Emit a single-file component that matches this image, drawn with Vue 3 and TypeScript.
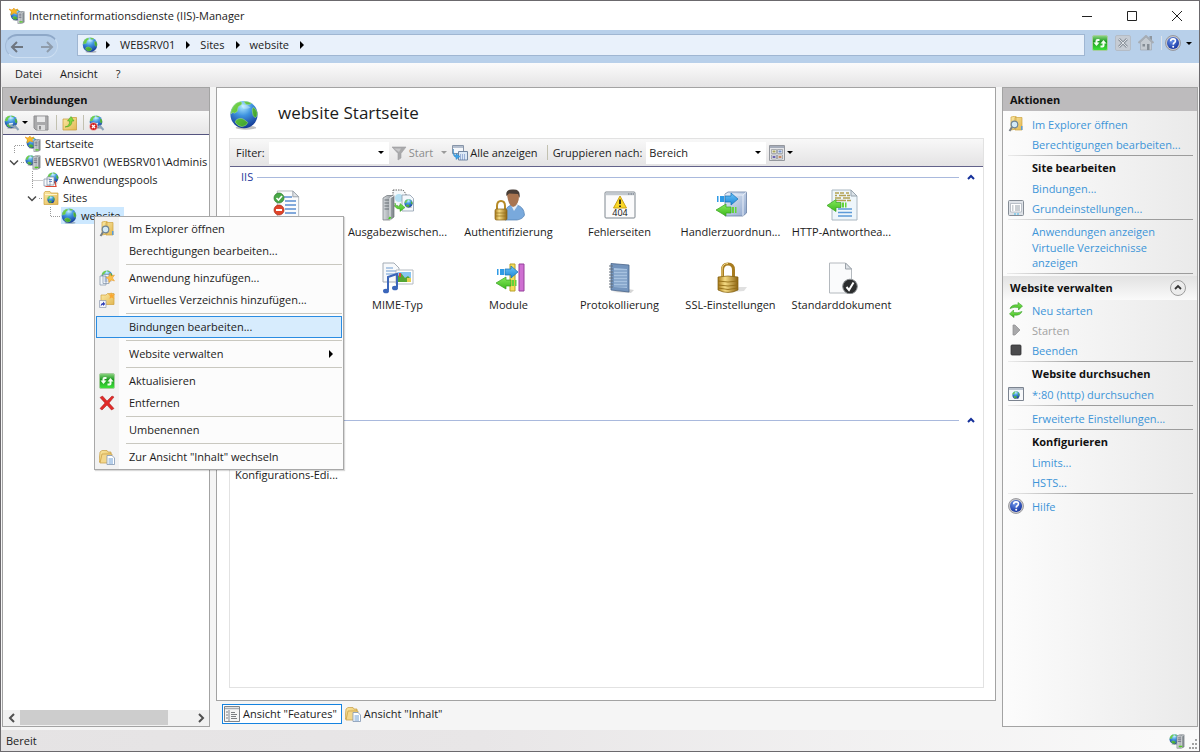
<script setup lang="ts">
import { ref } from 'vue'

interface TreeNode {
  label: string
  icon: string
  level: number
  guide: string
  open?: boolean
  selected?: boolean
}
interface MenuEntry {
  label?: string
  icon?: string
  hot?: boolean
  sub?: boolean
}
interface Feature {
  label: string
  icon: string
  badge?: string
}
interface ActionEntry {
  kind: 'link' | 'title' | 'line' | 'wrap'
  label?: string
  icon?: string
  disabled?: boolean
}

const crumbs: string[] = ['WEBSRV01', 'Sites', 'website']
const menus: string[] = ['Datei', 'Ansicht', '?']

const tree: TreeNode[] = [
  { label: 'Startseite', icon: 'iis', level: 0, guide: 'M7.5 18V10.5H18' },
  { label: 'WEBSRV01 (WEBSRV01\\Adminis', icon: 'server', level: 0, guide: 'M14 9.5H18', open: true },
  { label: 'Anwendungspools', icon: 'pool', level: 1, guide: 'M7.5 0V18M7.5 9.5H18' },
  { label: 'Sites', icon: 'sites', level: 1, guide: 'M14 9.5H18', open: true },
  { label: 'website', icon: 'globe', level: 2, guide: 'M7.5 0V9.5H18', selected: true },
]

const contextMenu: MenuEntry[] = [
  { label: 'Im Explorer öffnen', icon: 'explore' },
  { label: 'Berechtigungen bearbeiten...' },
  {},
  { label: 'Anwendung hinzufügen...', icon: 'appadd' },
  { label: 'Virtuelles Verzeichnis hinzufügen...', icon: 'vdir' },
  {},
  { label: 'Bindungen bearbeiten...', hot: true },
  {},
  { label: 'Website verwalten', sub: true },
  {},
  { label: 'Aktualisieren', icon: 'refresh' },
  { label: 'Entfernen', icon: 'remove' },
  {},
  { label: 'Umbenennen' },
  {},
  { label: 'Zur Ansicht "Inhalt" wechseln', icon: 'content' },
]

const features: Feature[] = [
  { label: '', icon: 'rules' },
  { label: 'Ausgabezwischen...', icon: 'cache' },
  { label: 'Authentifizierung', icon: 'auth' },
  { label: 'Fehlerseiten', icon: 'error', badge: '404' },
  { label: 'Handlerzuordnun...', icon: 'handler' },
  { label: 'HTTP-Antworthea...', icon: 'headers' },
  { label: '', icon: '' },
  { label: 'MIME-Typ', icon: 'mime' },
  { label: 'Module', icon: 'module' },
  { label: 'Protokollierung', icon: 'log' },
  { label: 'SSL-Einstellungen', icon: 'lock' },
  { label: 'Standarddokument', icon: 'doc' },
]

const siteActions: ActionEntry[] = [
  { kind: 'link', label: 'Im Explorer öffnen', icon: 'explore' },
  { kind: 'link', label: 'Berechtigungen bearbeiten...' },
  { kind: 'line' },
  { kind: 'title', label: 'Site bearbeiten' },
  { kind: 'link', label: 'Bindungen...' },
  { kind: 'link', label: 'Grundeinstellungen...', icon: 'settings' },
  { kind: 'line' },
  { kind: 'wrap', label: 'Anwendungen anzeigen' },
  { kind: 'wrap', label: 'Virtuelle Verzeichnisse anzeigen' },
]
const manageActions: ActionEntry[] = [
  { kind: 'link', label: 'Neu starten', icon: 'restart' },
  { kind: 'link', label: 'Starten', icon: 'play', disabled: true },
  { kind: 'link', label: 'Beenden', icon: 'stop' },
  { kind: 'line' },
  { kind: 'title', label: 'Website durchsuchen' },
  { kind: 'link', label: '*:80 (http) durchsuchen', icon: 'browse' },
  { kind: 'line' },
  { kind: 'link', label: 'Erweiterte Einstellungen...' },
  { kind: 'line' },
  { kind: 'title', label: 'Konfigurieren' },
  { kind: 'link', label: 'Limits...' },
  { kind: 'link', label: 'HSTS...' },
  { kind: 'line' },
  { kind: 'link', label: 'Hilfe', icon: 'help' },
]

const filter = ref('')
const grouping = ref('Bereich')
</script>

<template>
  <div class="window">
    <svg class="sprite" aria-hidden="true">
      <defs>
        <radialGradient id="sea" cx=".45" cy=".2" r=".85">
          <stop offset="0" stop-color="#b4ecff" /><stop offset=".4" stop-color="#3f94e0" /><stop offset="1" stop-color="#0f2f8c" />
        </radialGradient>
        <linearGradient id="land" x1="0" y1="0" x2="1" y2="1">
          <stop offset="0" stop-color="#7fdc50" /><stop offset="1" stop-color="#2c9424" />
        </linearGradient>
        <linearGradient id="gold" x1="0" y1="0" x2="1" y2="1">
          <stop offset="0" stop-color="#fbe9a4" /><stop offset="1" stop-color="#e2b854" />
        </linearGradient>
        <linearGradient id="brass" x1="0" y1="0" x2="1" y2="0">
          <stop offset="0" stop-color="#a87a1c" /><stop offset=".35" stop-color="#f6dc84" /><stop offset="1" stop-color="#8e6412" />
        </linearGradient>
        <linearGradient id="steel" x1="0" y1="0" x2="1" y2="0">
          <stop offset="0" stop-color="#d9dde0" /><stop offset="1" stop-color="#7f868c" />
        </linearGradient>
        <linearGradient id="leaf" x1="0" y1="0" x2="0" y2="1">
          <stop offset="0" stop-color="#8fd884" /><stop offset=".4" stop-color="#1f9a22" /><stop offset="1" stop-color="#3ee63a" />
        </linearGradient>
        <linearGradient id="cube" x1="0" y1="0" x2="1" y2="1">
          <stop offset="0" stop-color="#e8f0fa" /><stop offset="1" stop-color="#8ea6cc" />
        </linearGradient>
        <linearGradient id="sky" x1="0" y1="0" x2="0" y2="1">
          <stop offset="0" stop-color="#6cc4f8" /><stop offset="1" stop-color="#1c86d8" />
        </linearGradient>
        <linearGradient id="lime" x1="0" y1="0" x2="0" y2="1">
          <stop offset="0" stop-color="#86ea5c" /><stop offset="1" stop-color="#3cb81c" />
        </linearGradient>
        <radialGradient id="royal" cx=".4" cy=".3" r=".8">
          <stop offset="0" stop-color="#6a94ea" /><stop offset="1" stop-color="#0c2a9a" />
        </radialGradient>
      </defs>

      <symbol id="globe" viewBox="0 0 32 32">
        <ellipse cx="18" cy="29.500" rx="11" ry="2.200" fill="#000" opacity=".25" />
        <circle cx="16" cy="15.500" r="14.500" fill="url(#sea)" />
        <path d="M5 6Q8 2.500 12 1.800Q15 2.500 13 5L10 7Q9 9 9 12L6 14Q4 12 2 15Q2 10 5 6ZM16 1.500Q21 1.500 24 3.500Q22 5.500 18 4.500ZM26 8Q28.500 9 30 13Q30.500 18 28 19Q25 17 25 13Q24 9 26 8ZM8 21Q13 18 17 21.500L20 24Q19 27.500 14 28.500Q9 28 6.500 23.500Z" fill="url(#land)" stroke="#b2e88a" stroke-width=".5" />
        <path d="M13 5Q19 4 23 8Q19 10 15 9Z" fill="#fff" opacity=".3" />
      </symbol>
      <symbol id="tower" viewBox="0 0 10 16">
        <path d="M1 2L4 .5H9V14L6 15.500H1Z" fill="url(#steel)" stroke="#70777c" stroke-width=".6" />
        <path d="M2 4H6M2 6H6M2 8H6" stroke="#667" stroke-width=".8" />
        <path d="M6 15.500V2.500L9 .5" fill="none" stroke="#f4f6f7" stroke-width=".6" />
        <path d="M3 13.500H7" stroke="#52cc20" stroke-width="1.600" />
      </symbol>
      <symbol id="server" viewBox="0 0 16 16">
        <use href="#globe" x="0" y="1" width="11" height="11" />
        <use href="#tower" x="7" y="1" width="9" height="15" />
      </symbol>
      <symbol id="iis" viewBox="0 0 16 16">
        <use href="#globe" x="1" y="1" width="12" height="12" />
        <use href="#tower" x="8" y="3" width="8" height="13" />
        <path d="M0 1L3 2L5 0L6 2L9 1L7 4L8 6L5 5L2 7L2.500 4Z" fill="#f8b824" stroke="#e08c10" stroke-width=".5" />
      </symbol>
      <symbol id="globeplug" viewBox="0 0 16 16">
        <use href="#globe" x="0" y="0" width="14" height="14" />
        <path d="M5 9Q9 13 11 11L14.500 15" fill="none" stroke="#8da4b8" stroke-width="2" />
        <path d="M5 9L9 8.500" stroke="#e4eef4" stroke-width="1.500" />
      </symbol>
      <symbol id="globedel" viewBox="0 0 16 16">
        <use href="#globeplug" width="16" height="16" />
        <circle cx="4.500" cy="11.500" r="4" fill="#d02020" stroke="#fff" stroke-width=".5" />
        <path d="M3 10L6 13M6 10L3 13" stroke="#fff" stroke-width="1.400" />
      </symbol>
      <symbol id="save" viewBox="0 0 16 16">
        <path d="M1 1H15V15H3L1 13Z" fill="#a9a9ab" stroke="#8d8d8f" />
        <path d="M4 1.500H12V7H4Z" fill="#e9e9ea" />
        <path d="M4.500 10H12V15H4.500Z" fill="#dcdcdd" />
        <path d="M6 11H8V14.500H6Z" fill="#8d8d8f" />
      </symbol>
      <symbol id="folderup" viewBox="0 0 16 16">
        <path d="M1 4H8L9.500 2.500H14.500V15H1Z" fill="url(#gold)" stroke="#c69a35" stroke-width=".7" />
        <path d="M3 12Q8 11 7.500 6H5.500L9 1.500L12 6H10Q10 12 3 12Z" fill="#7ed83c" stroke="#3f9a1c" stroke-width=".5" />
      </symbol>
      <symbol id="pool" viewBox="0 0 16 16">
        <use href="#globe" x="4" y="0" width="12" height="12" />
        <path d="M1 7H7V14H1ZM4 5H11V13H4Z" fill="#f7fafc" stroke="#7b8ba0" stroke-width=".7" />
        <path d="M6 7.500H9M6 9.500H9" stroke="#4f76bc" stroke-width=".8" />
        <path d="M2.500 14.500L13 14.500L12 9" fill="none" stroke="#dc4a36" stroke-width="1.200" />
      </symbol>
      <symbol id="sites" viewBox="0 0 16 16">
        <path d="M1 3L2 1.500H7L8 3H15V14.500H1Z" fill="url(#gold)" stroke="#cfa13c" stroke-width=".7" />
        <path d="M2 4.500H14" stroke="#fff5cc" />
        <use href="#globe" x="4" y="5.500" width="8" height="8" />
      </symbol>
      <symbol id="explore" viewBox="0 0 16 16">
        <path d="M3 1L8 0V13L3 14ZM7 1.500H14V14H7Z" fill="url(#gold)" stroke="#cfa540" stroke-width=".7" />
        <path d="M13 10H14.500V14H13Z" fill="#5a9cd8" />
        <path d="M4.500 10.500L1.500 15" stroke="#777f86" stroke-width="2" />
        <circle cx="6.500" cy="8.500" r="3.300" fill="#d3eaf8" stroke="#6f8494" stroke-width="1.200" />
      </symbol>
      <symbol id="appadd" viewBox="0 0 16 16">
        <use href="#globe" x="2" y="0" width="12" height="12" />
        <path d="M1 6H7V15H1ZM4 4.500H10V13.500H4Z" fill="#f2f6fa" stroke="#8192a6" stroke-width=".7" />
        <path d="M5.500 7H8.500M5.500 9H8.500M5.500 11H8.500" stroke="#6b86b4" stroke-width=".8" />
        <path d="M11 3L12 6L15.500 5L13.500 8L15.500 11L12 10L10 12.500L9.500 9L7 7.500L10 6.500Z" fill="#fbc14a" stroke="#e9962a" stroke-width=".5" />
      </symbol>
      <symbol id="vdir" viewBox="0 0 16 16">
        <path d="M2 3H7L8.500 1.500H15V12.500H2Z" fill="url(#gold)" stroke="#cfa13c" stroke-width=".7" />
        <path d="M12 0L13 2.500L16 2L14 4.500L15.500 7L12.500 5.500L10.500 7L11 4L9 2L11.500 2.500Z" fill="#f9a832" />
        <path d="M.5 8.500H7V15.500H.5Z" fill="#f6f8fc" stroke="#8e9ab0" stroke-width=".7" />
        <path d="M1.800 14.500Q1.500 11 4 11V9.500L6.300 12L4 14V12.700Q2.500 12.500 1.800 14.500Z" fill="#2f3fb8" />
      </symbol>
      <symbol id="refresh" viewBox="0 0 16 16">
        <rect x=".5" y=".5" width="15" height="15" rx="1.500" fill="url(#leaf)" stroke="#a7cda0" />
        <path d="M7.500 4H5.500Q3.500 4 3.500 6V7.500H1.500L4.500 11L7.500 7.500H5.500V6H7.500ZM8.500 12.500H10.500Q12.500 12.500 12.500 10.500V8.500H14.500L11.500 5L8.500 8.500H10.500V10.500H8.500Z" fill="#f4fff2" />
      </symbol>
      <symbol id="remove" viewBox="0 0 16 16">
        <path d="M1 2.500L3.500 1L8 6L13 1L15 2L10 8L15 13.500L12.500 15L8 10L3 15L1 13.500L6 8Z" fill="#e02b28" stroke="#a81818" stroke-width=".5" />
      </symbol>
      <symbol id="content" viewBox="0 0 16 16">
        <path d="M1 3L3 1.500H8L9 3H12V13H0Z" fill="url(#gold)" stroke="#c69c43" stroke-width=".7" />
        <path d="M3 5H13V14H1Z" fill="#f3d78c" stroke="#c69c43" stroke-width=".7" />
        <path d="M8 6.500H13L15.500 9V15.500H8Z" fill="#fff" stroke="#7f95b2" stroke-width=".8" />
        <path d="M9.500 10H14M9.500 12H14M9.500 14H14" stroke="#5c93d0" stroke-width=".9" />
      </symbol>
      <symbol id="stopgray" viewBox="0 0 16 16">
        <rect x=".5" y=".5" width="15" height="15" rx="1.500" fill="#c6ccd4" stroke="#b4bcc6" />
        <path d="M4 4L12 12M12 4L4 12" stroke="#8e959e" stroke-width="2.600" />
        <path d="M4 4L12 12M12 4L4 12" stroke="#dde1e6" stroke-width="1" />
      </symbol>
      <symbol id="home" viewBox="0 0 16 16">
        <path d="M11.500 1H14V5H11.500Z" fill="#8f979f" />
        <path d="M2.500 7L8 2L13.500 7V15H2.500Z" fill="#c5cbd1" stroke="#a0a8b0" stroke-width=".7" />
        <path d="M.5 8L8 1L15.500 8" fill="none" stroke="#a6adb5" stroke-width="2" />
        <path d="M4.500 9H7V11.500H4.500ZM9 9H11.500V15H9Z" fill="#858d95" />
      </symbol>
      <symbol id="help" viewBox="0 0 16 16">
        <circle cx="8" cy="8" r="7.500" fill="#c8c8cc" stroke="#8b8b90" stroke-width=".8" />
        <circle cx="8" cy="8" r="6" fill="url(#royal)" />
        <path d="M5.700 6.200Q5.800 3.800 8.200 3.900Q10.500 4 10.400 6Q10.300 7.200 9 8Q8.300 8.500 8.200 9.600" fill="none" stroke="#fff" stroke-width="1.700" />
        <circle cx="8.200" cy="11.800" r="1" fill="#fff" />
      </symbol>
      <symbol id="funnel" viewBox="0 0 16 16">
        <path d="M1 2H15L10 8.500V13L7 15V8.500Z" fill="#a9a9ab" stroke="#a0a0a2" stroke-width=".6" />
        <path d="M3 3.500H10L8 7Z" fill="#c8c8ca" />
      </symbol>
      <symbol id="showall" viewBox="0 0 16 16">
        <path d="M.5 .5H11.500V8.500H.5Z" fill="#f6f8fb" stroke="#8795a8" />
        <path d="M1 2H11" stroke="#9eacc0" stroke-width="1.500" />
        <path d="M6.500 6.500H15.500V15H6.500Z" fill="#dce8f6" stroke="#7286a2" />
        <path d="M8 10H14M8 12H14M8 14H14" stroke="#5878b8" stroke-width="1" stroke-dasharray="1 1" />
        <path d="M1.500 4Q1 10 4 10.500V8.500L8 11.500L4 14.500V12.500Q0 11 1.500 4Z" fill="#3fa3e8" stroke="#1f78bc" stroke-width=".4" />
      </symbol>
      <symbol id="tiles" viewBox="0 0 16 16">
        <path d="M.5 .5H15.500V15.500H.5Z" fill="#e4e5e8" stroke="#94979d" />
        <path d="M1 2H15" stroke="#a5acba" stroke-width="2" />
        <path d="M2.500 4.500H7.500V8.500H2.500ZM8.500 4.500H13.500V8.500H8.500ZM2.500 10H7.500V14H2.500ZM8.500 10H13.500V14H8.500Z" fill="#f4f4f4" stroke="#8d9096" stroke-width=".7" />
        <path d="M3.500 5.500H6.500V7.500H3.500Z" fill="#a9a75c" /><path d="M9.500 5.500H12.500V7.500H9.500Z" fill="#6f8fca" />
        <path d="M3.500 11H6.500V13H3.500Z" fill="#6a64b0" /><path d="M9.500 11H12.500V13H9.500Z" fill="#c48a64" />
      </symbol>
      <symbol id="features" viewBox="0 0 16 16">
        <path d="M.5 .5H15.500V15.500H.5Z" fill="#f5f5f4" stroke="#808488" />
        <path d="M1 2.500H15M5 4V15" stroke="#a9adb2" stroke-width="1.500" />
        <path d="M2 6H4M2 9H4M2 12H4M7 6.500H11M7 8.500H13M7 10.500H12M7 12.500H13" stroke="#6d7074" stroke-width=".9" />
      </symbol>
      <symbol id="settings" viewBox="0 0 16 16">
        <rect x=".5" y=".5" width="15" height="15" rx="1" fill="#dfe3e8" stroke="#858c95" />
        <path d="M2.500 3.500H13.500V12H2.500Z" fill="#fff" stroke="#a3abb5" stroke-width=".7" />
        <path d="M4 6H5.500M7 6H12M4 8H5.500M7 8H12M4 10H5.500M7 10H12" stroke="#8b949e" stroke-width=".9" />
        <path d="M6 14H8M9 14H11" stroke="#45b6e6" />
      </symbol>
      <symbol id="restart" viewBox="0 0 16 16">
        <path d="M2 6.500Q4 2 10 3V.5L14.500 4L10.500 8V5.500Q6 4.500 2 6.500Z" fill="url(#lime)" stroke="#35a026" stroke-width=".6" />
        <path d="M14 9.500Q12 14 6 13V15.500L1.500 12L5.500 8V10.500Q10 11.500 14 9.500Z" fill="url(#lime)" stroke="#35a026" stroke-width=".6" />
      </symbol>
      <symbol id="play" viewBox="0 0 16 16">
        <path d="M5 3H7L12 8L7 13H5Z" fill="#a8a8aa" stroke="#8e8e90" stroke-width=".7" />
      </symbol>
      <symbol id="stop" viewBox="0 0 16 16">
        <rect x="3" y="3" width="10" height="10" rx="1" fill="#4b4b4d" stroke="#303032" stroke-width=".8" />
      </symbol>
      <symbol id="browse" viewBox="0 0 16 16">
        <path d="M.5 1.500H15.500V14.500H.5Z" fill="#f7f8fa" stroke="#7c8490" />
        <path d="M1 3H15" stroke="#a9b3c0" stroke-width="1.500" />
        <use href="#globe" x="4" y="5" width="8" height="8" />
      </symbol>

      <symbol id="page" viewBox="0 0 24 32">
        <path d="M1 1H17L23 7V31H1Z" fill="#fafbfc" stroke="#b4b9be" />
        <path d="M17 1V7H23Z" fill="#dfe3e7" stroke="#9ca3aa" />
      </symbol>
      <symbol id="rightleft" viewBox="0 0 32 32">
        <path d="M6 7H10V13H6ZM3 7H4.500V13H3Z" fill="#2f9ae6" />
        <path d="M11 7H17V4L24 10L17 16V13H11Z" fill="url(#sky)" stroke="#1670b4" stroke-width=".7" />
        <path d="M17 18H12V15L2 21L12 27V24H17Z" fill="url(#lime)" stroke="#38a020" stroke-width=".7" />
        <path d="M18 18H20V24H18ZM21 18H22.500V24H21Z" fill="#63d43a" />
      </symbol>
      <symbol id="rules" viewBox="0 0 32 32">
        <use href="#page" x="5" y="1" width="24" height="31" />
        <path d="M13 8H21M14 12H25M14 16H25M14 20H25M14 24H25" stroke="#5b8fd0" stroke-width="1.400" />
        <circle cx="8" cy="9" r="5" fill="#48a846" stroke="#2d7a2c" stroke-width=".7" />
        <path d="M5.500 9L7.500 11L11 7" fill="none" stroke="#fff" stroke-width="1.600" />
        <circle cx="8" cy="21" r="5" fill="#e0452a" stroke="#a82a16" stroke-width=".7" />
        <path d="M5 21H11" stroke="#fff" stroke-width="2" />
      </symbol>
      <symbol id="cache" viewBox="0 0 32 32">
        <path d="M11 1H21L24 5V17H11Z" fill="#f4f8fa" stroke="#555" stroke-dasharray="1.500 1" stroke-width=".9" />
        <circle cx="17" cy="9" r="4" fill="#b4dff2" />
        <path d="M1 9L5 6.500H12V28L8 31H1Z" fill="url(#steel)" stroke="#6d7378" stroke-width=".7" />
        <path d="M8 31V9L12 6.500" fill="none" stroke="#eef1f3" />
        <path d="M2.500 11H7M2.500 14H7M2.500 17H7M2.500 20H7" stroke="#676e74" stroke-width="1.200" />
        <path d="M7 30L8.500 28" stroke="#45ce20" stroke-width="2" />
        <path d="M20 6H28L31.500 9.500V22H20Z" fill="#f4f8fc" stroke="#8e9cac" stroke-width=".8" />
        <use href="#globe" x="22" y="10" width="9" height="9" />
        <path d="M13 14Q14 18 18 17V14.500L23 18.500L18 22.500V20Q12 20 13 14Z" fill="url(#lime)" stroke="#38a020" stroke-width=".5" />
      </symbol>
      <symbol id="auth" viewBox="0 0 32 32">
        <path d="M12 31Q10 19 18 16H24Q31 18 31.500 26Q30 30 24 31Z" fill="#79a9dc" stroke="#527fb2" stroke-width=".7" />
        <path d="M18 16L21 22L25 16Z" fill="#e5edf5" />
        <path d="M14 5Q14 1 20 1Q26 1 26 7Q26 16 20 18Q15 16 14 5Z" fill="#a87450" />
        <path d="M13.500 7Q12 0 20 .5Q28 0 26.500 9L25 5L16 4.500Z" fill="#483d36" />
        <path d="M4 21V17Q4 12 8 12Q12 12 12 17V21" fill="none" stroke="#b68a26" stroke-width="2" />
        <rect x="2" y="20" width="12" height="11" rx="1.500" fill="url(#brass)" stroke="#886214" stroke-width=".7" />
        <path d="M3 24H13M3 27H13" stroke="#94701c" stroke-width=".7" />
      </symbol>
      <symbol id="error" viewBox="0 0 32 32">
        <rect x="1" y="3" width="30" height="26" rx="1" fill="#fbfbfc" stroke="#7f878f" />
        <path d="M2 5H30" stroke="#c2c8cf" stroke-width="2.500" />
        <path d="M24 5H25.500M26.500 5H28M28.800 5H30" stroke="#66717c" />
        <path d="M16 7L22.500 19H9.500Z" fill="#fad727" stroke="#cba314" />
        <path d="M16 10.500V15M16 16.500V18" stroke="#1b1b1b" stroke-width="1.700" />
      </symbol>
      <symbol id="handler" viewBox="0 0 32 32">
        <path d="M10 5L13 3H31.500V24L28 27H10Z" fill="url(#cube)" stroke="#6a80a4" stroke-width=".8" />
        <path d="M28 27V6L31.500 3M28 6H10" fill="none" stroke="#e8eef8" />
        <use href="#rightleft" x="-1" y="0" width="32" height="32" />
      </symbol>
      <symbol id="headers" viewBox="0 0 32 32">
        <path d="M6 1H25L31 7V31H6Z" fill="#eef6fb" stroke="#a9b6c0" />
        <path d="M25 1V7H31Z" fill="#dae2e8" stroke="#98a4ae" />
        <path d="M9 4H13M14 4H18M20 4H23M9 6.500H11M13 6.500H20M21 6.500H24M9 9H15M17 9H24M10 11.500H20M21 11.500H25" stroke="#b3a152" stroke-width="1.600" />
        <path d="M12 20H26M12 23.500H26M12 27H26" stroke="#5c9ad8" stroke-width="1.500" />
        <path d="M15 13.500H10V10.500L1 16.500L10 22.500V18.500H15Z" fill="url(#lime)" stroke="#38a020" stroke-width=".7" />
        <path d="M16 13.500H18V18.500H16ZM19 13.500H20.500V18.500H19Z" fill="#63d43a" />
      </symbol>
      <symbol id="mime" viewBox="0 0 32 32">
        <path d="M1 1H12L17 6V20H1Z" fill="#f7f9fb" stroke="#a4acb5" />
        <path d="M4 6H11M4 9H14M4 12H14" stroke="#6d9bd2" stroke-width="1.200" />
        <path d="M14 8H31V22H14Z" fill="#fff" stroke="#b4bac1" />
        <path d="M16 10H29V20H16Z" fill="#87c4f0" />
        <path d="M16 20V14L19 11L23 16L26 14L29 17V20Z" fill="#54a634" />
        <path d="M17 11H19V15H17Z" fill="#e0463c" /><path d="M25 16H29V20H25Z" fill="#e4cf50" />
        <path d="M6 28V15L15 12V25" fill="none" stroke="#3b66ba" stroke-width="2" />
        <ellipse cx="4" cy="29" rx="3" ry="2.300" fill="#3b66ba" /><ellipse cx="13" cy="26" rx="3" ry="2.300" fill="#3b66ba" />
      </symbol>
      <symbol id="module" viewBox="0 0 32 32">
        <path d="M17 2H22V29H17Z" fill="#f4dd5c" stroke="#b9a028" />
        <path d="M26 2H31V29H26Z" fill="#cf70d2" stroke="#96409c" />
        <use href="#rightleft" x="1" y="0" width="32" height="32" />
      </symbol>
      <symbol id="log" viewBox="0 0 32 32">
        <path d="M8 30L27 31L30 28L24 27Z" fill="#000" opacity=".16" />
        <path d="M7 1.500L25 3V30L7 28Z" fill="#7394bd" stroke="#4a6489" stroke-width=".8" />
        <path d="M10 6L23 7V26L10 25Z" fill="#a7c2e0" />
        <path d="M10 9H23M10 12H23M10 15H23M10 18H23M10 21H23M10 24H23" stroke="#587ca9" stroke-width=".7" />
        <path d="M5 4H9M5 7H9M5 10H9M5 13H9M5 16H9M5 19H9M5 22H9M5 25H9" stroke="#66707c" stroke-width="1.100" />
      </symbol>
      <symbol id="lock" viewBox="0 0 32 32">
        <path d="M17 30L29 29L32 25L24 25Z" fill="#000" opacity=".12" />
        <path d="M7.500 16V8Q7.500 2 13 2Q18.500 2 18.500 8V16" fill="none" stroke="#a87c20" stroke-width="3" />
        <path d="M7 15V8Q7 1.500 13 1.500" fill="none" stroke="#f3db8a" stroke-width="1" />
        <path d="M3 15Q13 13 23 15V28Q13 33 3 28Z" fill="url(#brass)" stroke="#83600f" stroke-width=".7" />
        <path d="M3 19Q13 21 23 19M3 23Q13 25 23 23M3 26Q13 29 23 26" fill="none" stroke="#936d16" stroke-width=".9" />
      </symbol>
      <symbol id="doc" viewBox="0 0 32 32">
        <use href="#page" x="1" y="0" width="27" height="32" />
        <circle cx="24" cy="24.500" r="7.300" fill="#2b2d2e" stroke="#8b8f92" />
        <path d="M20.500 25L23 28L27.500 20.500" fill="none" stroke="#fff" stroke-width="2" />
      </symbol>
    </svg>

    <header class="titlebar">
      <svg class="ico"><use href="#iis" /></svg>
      <span class="caption">Internetinformationsdienste (IIS)-Manager</span>
      <button class="sys" aria-label="Minimieren"><svg viewBox="0 0 12 12"><path d="M1 6.500H11" /></svg></button>
      <button class="sys" aria-label="Maximieren"><svg viewBox="0 0 12 12"><path d="M1.500 1.500H10.500V10.500H1.500Z" /></svg></button>
      <button class="sys" aria-label="Schließen"><svg viewBox="0 0 12 12"><path d="M1 1L11 11M11 1L1 11" /></svg></button>
    </header>

    <nav class="navbar">
      <div class="history">
        <button aria-label="Zurück"><svg viewBox="0 0 14 12"><path d="M7 1L2 6L7 11M2 6H13" /></svg></button>
        <button class="dim" aria-label="Vorwärts"><svg viewBox="0 0 14 12"><path d="M7 1L12 6L7 11M12 6H1" /></svg></button>
      </div>
      <div class="address">
        <svg class="ico"><use href="#globe" /></svg>
        <i class="tri-r"></i>
        <template v-for="c in crumbs" :key="c">
          <button class="crumb">{{ c }}</button>
          <i class="tri-r"></i>
        </template>
      </div>
      <div class="navtools">
        <button aria-label="Aktualisieren"><svg class="ico"><use href="#refresh" /></svg></button>
        <button aria-label="Anhalten"><svg class="ico"><use href="#stopgray" /></svg></button>
        <button aria-label="Startseite"><svg class="ico"><use href="#home" /></svg></button>
        <i class="bar light"></i>
        <button class="helpbtn" aria-label="Hilfe"><svg class="ico"><use href="#help" /></svg><i class="tri-d"></i></button>
      </div>
    </nav>

    <div class="menubar">
      <button v-for="m in menus" :key="m">{{ m }}</button>
    </div>

    <main class="workspace">
      <section class="connections">
        <h2 class="panehead">Verbindungen</h2>
        <div class="conntools">
          <button aria-label="Verbinden"><svg class="ico"><use href="#globeplug" /></svg><i class="tri-d"></i></button>
          <button class="save" aria-label="Speichern"><svg class="ico"><use href="#save" /></svg></button>
          <i class="bar"></i>
          <button aria-label="Nach oben"><svg class="ico"><use href="#folderup" /></svg></button>
          <i class="bar"></i>
          <button aria-label="Verbindung löschen"><svg class="ico"><use href="#globedel" /></svg></button>
        </div>
        <ul class="tree">
          <li v-for="n in tree" :key="n.label" :class="'level' + n.level">
            <svg class="guide" viewBox="0 0 18 18">
              <path class="dots" :d="n.guide" />
              <path v-if="n.open" class="chev" d="M3 7.500L7 11.500L11 7.500" />
            </svg>
            <span class="node" :class="{ selected: n.selected }">
              <svg class="ico"><use :href="'#' + n.icon" /></svg>
              <span>{{ n.label }}</span>
            </span>
          </li>
        </ul>
        <div class="hscroll">
          <button aria-label="Nach links"><svg viewBox="0 0 8 10"><path d="M6 1L2 5L6 9" /></svg></button>
          <div class="track"><div class="thumb"></div></div>
          <button aria-label="Nach rechts"><svg viewBox="0 0 8 10"><path d="M2 1L6 5L2 9" /></svg></button>
        </div>
      </section>

      <section class="center">
        <div class="sheet">
          <div class="pagehead">
            <svg class="big"><use href="#globe" /></svg>
            <h1>website Startseite</h1>
          </div>
          <div class="featurebox">
            <div class="filterbar">
              <label for="filter">Filter:</label>
              <div class="combo">
                <input id="filter" v-model="filter" type="text" />
                <i class="tri-d"></i>
              </div>
              <button class="start" disabled><svg class="ico"><use href="#funnel" /></svg>Start<i class="tri-d"></i></button>
              <button class="all"><svg class="ico"><use href="#showall" /></svg>Alle anzeigen</button>
              <i class="bar"></i>
              <label for="group">Gruppieren nach:</label>
              <div class="combo">
                <select id="group" v-model="grouping"><option>Bereich</option></select>
                <i class="tri-d"></i>
              </div>
              <button class="view" aria-label="Ansicht"><svg class="ico"><use href="#tiles" /></svg><i class="tri-d"></i></button>
            </div>
            <div class="group">
              <div class="grouphead">
                <span>IIS</span><i class="rule"></i>
                <button aria-label="Gruppe einklappen"><svg viewBox="0 0 8 6"><path d="M1 5L4 2L7 5" /></svg></button>
              </div>
              <div class="grid tall">
                <div v-for="(f, i) in features" :key="i" class="feature">
                  <svg class="large" viewBox="0 0 32 32">
                    <use v-if="f.icon" :href="'#' + f.icon" width="32" height="32" />
                    <text v-if="f.badge" class="badge" x="16" y="27" text-anchor="middle">{{ f.badge }}</text>
                  </svg>
                  <span>{{ f.label }}</span>
                </div>
              </div>
            </div>
            <div class="group">
              <div class="grouphead">
                <i class="rule"></i>
                <button aria-label="Gruppe einklappen"><svg viewBox="0 0 8 6"><path d="M1 5L4 2L7 5" /></svg></button>
              </div>
              <div class="grid">
                <div class="feature"><svg class="large"></svg><span>Konfigurations-Edi...</span></div>
              </div>
            </div>
          </div>
        </div>
        <div class="tabs">
          <button class="tab active"><svg class="ico"><use href="#features" /></svg>Ansicht "Features"</button>
          <button class="tab"><svg class="ico"><use href="#content" /></svg>Ansicht "Inhalt"</button>
        </div>
      </section>

      <aside class="actions">
        <h2 class="panehead">Aktionen</h2>
        <div class="actionlist first">
          <template v-for="(a, i) in siteActions" :key="i">
            <hr v-if="a.kind === 'line'" />
            <h3 v-else-if="a.kind === 'title'">{{ a.label }}</h3>
            <a v-else href="#" :class="{ wrap: a.kind === 'wrap' }">
              <svg class="ico"><use v-if="a.icon" :href="'#' + a.icon" /></svg>
              <span>{{ a.label }}</span>
            </a>
          </template>
        </div>
        <hr />
        <div class="subhead">
          <h2>Website verwalten</h2>
          <button aria-label="Einklappen"><svg viewBox="0 0 16 16"><circle cx="8" cy="8" r="7.500" /><path d="M5 9L8 6L11 9" /></svg></button>
        </div>
        <div class="actionlist">
          <template v-for="(a, i) in manageActions" :key="i">
            <hr v-if="a.kind === 'line'" />
            <h3 v-else-if="a.kind === 'title'">{{ a.label }}</h3>
            <a v-else href="#" :class="{ disabled: a.disabled }">
              <svg class="ico"><use v-if="a.icon" :href="'#' + a.icon" /></svg>
              <span>{{ a.label }}</span>
            </a>
          </template>
        </div>
      </aside>
    </main>

    <footer class="status">
      <span>Bereit</span>
      <svg class="ico"><use href="#server" /></svg>
      <svg class="grip" viewBox="0 0 10 12"><path d="M7 1H9V3H7ZM4 5H6V7H4ZM7 5H9V7H7ZM1 9H3V11H1ZM4 9H6V11H4ZM7 9H9V11H7Z" /></svg>
    </footer>

    <div class="context" role="menu">
      <template v-for="(m, i) in contextMenu" :key="i">
        <hr v-if="!m.label" />
        <button v-else role="menuitem" :class="{ hot: m.hot }">
          <svg class="ico"><use v-if="m.icon" :href="'#' + m.icon" /></svg>
          <span>{{ m.label }}</span>
          <i v-if="m.sub" class="tri-r"></i>
        </button>
      </template>
    </div>
  </div>
</template>

<style>
html,
body {
  margin: 0;
}
</style>

<style scoped>
.window,
.window * {
  box-sizing: border-box;
}
.window {
  position: relative;
  display: flex;
  flex-direction: column;
  min-height: 100vh;
  border: 1px solid #6b696d;
  background: #f5f5f5;
  color: #1b1b1b;
  font: 11px/16px "Open Sans", "Noto Sans", sans-serif;
}
.sprite {
  position: absolute;
  width: 0;
  height: 0;
}
button,
input,
select {
  margin: 0;
  padding: 0;
  border: 0;
  background: none;
  color: inherit;
  font: inherit;
  white-space: nowrap;
}
h1,
h2,
h3,
ul {
  margin: 0;
  padding: 0;
  font-size: inherit;
}
.ico {
  display: block;
  width: 16px;
  height: 16px;
  flex: none;
}
.tri-r {
  flex: none;
  border: 4px solid transparent;
  border-left-color: #000;
  border-right-width: 0;
}
.tri-d {
  flex: none;
  border: 3px solid transparent;
  border-top-color: #000;
  border-bottom-width: 0;
}
.bar {
  flex: none;
  width: 1px;
  height: 15px;
  background: #c2c1b0;
}
.bar.light {
  background: #dfe4ea;
  height: 14px;
}

.titlebar {
  display: flex;
  align-items: center;
  height: 29px;
  padding-left: 8px;
  background: #fff;
}
.caption {
  flex: 1;
  margin-left: 4px;
}
.sys {
  display: grid;
  place-items: center;
  width: 45px;
  height: 28px;
}
.sys svg {
  width: 12px;
  height: 12px;
  fill: none;
  stroke: #222;
}

.navbar {
  display: flex;
  align-items: flex-start;
  height: 33px;
  padding: 4px 7px 0 4px;
  background: #b8d0ea;
}
.history {
  display: flex;
  justify-content: space-between;
  align-items: center;
  width: 53px;
  height: 24px;
  margin-right: 19px;
  padding: 0 3px 0 4px;
  border-radius: 12px;
  border: 1px solid #a4bcd8;
  border-top: 2px solid #8ea8c8;
  border-right-color: #c8dcf0;
  border-bottom-color: #cfe0f2;
  background: #b5cde8;
}
.history svg {
  display: block;
  width: 14px;
  height: 12px;
  fill: none;
  stroke: #6e7680;
  stroke-width: 2;
}
.history .dim svg {
  stroke: #8f9cab;
}
.address {
  display: flex;
  flex: 1;
  align-items: center;
  height: 22px;
  padding-left: 4px;
  border: 1px solid #9fb6d2;
  background: #e9f1fb;
}
.address .tri-r {
  margin: 0 8px;
}
.crumb {
  margin: 0 3px 0 2px;
}
.navtools {
  display: flex;
  align-items: center;
  gap: 7px;
  height: 18px;
  margin-left: 7px;
}
.navtools button {
  display: flex;
  align-items: center;
}
.navtools .bar {
  margin-right: -4px;
}
.helpbtn .tri-d {
  margin-left: 5px;
}

.menubar {
  display: flex;
  gap: 18px;
  height: 24px;
  padding: 0 14px 2px;
  background: linear-gradient(#fbfbfb, #e5e4e5);
}

.workspace {
  display: flex;
  flex: 1;
  padding: 0 1px 3px;
}
.panehead {
  height: 23px;
  padding-left: 7px;
  background: #bdbbbd;
  color: #111;
  font-weight: 700;
  line-height: 24px;
}
.connections {
  display: flex;
  flex-direction: column;
  width: 208px;
  margin-right: 6px;
  border: 1px solid #a3a3a3;
  background: #fff;
}
.conntools {
  display: flex;
  align-items: center;
  height: 24px;
  gap: 5px;
  padding-left: 1px;
  border-bottom: 1px solid #54547f;
  background: linear-gradient(#f8f8f8, #e6e5e6);
}
.conntools button {
  display: flex;
  align-items: center;
}
.conntools .tri-d {
  margin-left: 2px;
}
.save {
  margin-right: 2px;
}
.tree {
  flex: 1;
  list-style: none;
  padding-left: 4px;
}
.tree li {
  display: flex;
  height: 18px;
  line-height: 14px;
  white-space: nowrap;
}
.level1 {
  padding-left: 18px;
}
.level2 {
  padding-left: 36px;
}
.guide {
  flex: none;
  width: 18px;
  height: 18px;
}
.guide path {
  fill: none;
}
.dots {
  stroke: #9a9a9a;
  stroke-dasharray: 1 1;
}
.chev {
  stroke: #4a4a4a;
  stroke-width: 1.5;
}
.node {
  display: flex;
  align-items: center;
  gap: 4px;
  height: 17px;
  padding-right: 3px;
}
.node.selected {
  background: #cce8ff;
}
.hscroll {
  display: flex;
  height: 16px;
  background: #f1f1f1;
}
.hscroll button {
  display: grid;
  place-items: center;
  width: 17px;
}
.hscroll button svg {
  width: 8px;
  height: 10px;
  fill: none;
  stroke: #505050;
  stroke-width: 2;
}
.track {
  flex: 1;
}
.thumb {
  width: 86%;
  height: 15px;
  background: #cdcdcd;
}

.center {
  display: flex;
  flex: 1;
  flex-direction: column;
  min-width: 0;
  margin-right: 6px;
}
.sheet {
  display: flex;
  flex: 1;
  flex-direction: column;
  padding: 0 11px 12px 12px;
  border: 1px solid #a3a3a3;
  background: #fff;
}
.pagehead {
  display: flex;
  align-items: center;
  height: 50px;
}
.big {
  width: 30px;
  height: 32px;
  margin-top: 4px;
}
.pagehead h1 {
  margin-left: 19px;
  font-size: 17px;
  font-weight: 400;
  line-height: 24px;
}
.featurebox {
  flex: 1;
  border: 1px solid #e2e2e2;
}
.filterbar {
  display: flex;
  align-items: center;
  height: 28px;
  padding-left: 6px;
  border-bottom: 1px solid #62628a;
  background: linear-gradient(#f8f8f8, #e4e3e4);
}
.combo {
  display: flex;
  align-items: center;
  width: 120px;
  height: 22px;
  margin-left: 4px;
  padding: 0 5px 0 3px;
  background: #fff;
}
.combo input,
.combo select {
  flex: 1;
  min-width: 0;
  height: 20px;
  appearance: none;
  outline: none;
}
.filterbar button {
  display: flex;
  align-items: center;
}
.start {
  margin-left: 2px;
  color: #8c8c8c;
}
.filterbar .start .tri-d {
  margin-left: 8px;
  border-top-color: #9a9a9a;
}
.start .ico,
.all .ico {
  margin-right: 2px;
}
.all {
  margin-left: 5px;
}
.filterbar > .bar {
  margin: 0 5px 0 9px;
}
.view {
  margin-left: 3px;
}
.view .tri-d {
  margin-left: 2px;
}
.grouphead {
  display: flex;
  align-items: center;
  height: 20px;
  padding: 0 8px 0 11px;
  color: #27379c;
}
.rule {
  flex: 1;
  height: 1px;
  margin: 1px 8px 0 4px;
  background: #a9b9dd;
}
.grouphead button svg {
  display: block;
  width: 8px;
  height: 6px;
  fill: none;
  stroke: #15309a;
  stroke-width: 2;
}
.grid {
  display: grid;
  grid-template-columns: repeat(auto-fill, 111px);
  grid-auto-rows: 73px;
  padding-left: 1px;
}
.grid.tall {
  grid-template-columns: repeat(6, 111px);
  min-height: 223px;
}
.feature {
  display: flex;
  flex-direction: column;
  align-items: center;
  padding-top: 2px;
  white-space: nowrap;
}
.large {
  width: 32px;
  height: 32px;
  margin-bottom: 3px;
  flex: none;
}
.badge {
  font-size: 9px;
  fill: #111;
}
.tabs {
  display: flex;
  gap: 3px;
  padding: 3px 0 3px 6px;
}
.tab {
  display: flex;
  align-items: center;
  gap: 3px;
  height: 20px;
}
.tab.active {
  padding: 0 4px 0 1px;
  border: 1px solid #1583e0;
  background: #fff;
}

.actions {
  width: 196px;
  border: 1px solid #a3a3a3;
  background: linear-gradient(90deg, #fcfcfc, #eaeaea);
}
.actionlist {
  padding: 0 4px 0 5px;
}
.actionlist.first {
  padding-top: 3px;
}
.actionlist h3 {
  height: 20px;
  padding-left: 24px;
  color: #111;
  line-height: 20px;
}
.actionlist a {
  display: flex;
  align-items: center;
  gap: 8px;
  height: 20px;
  color: #3d95d8;
  text-decoration: none;
  line-height: 15px;
}
.actionlist a.wrap {
  height: auto;
  padding: 1px 20px 0 0;
}
.actionlist a.disabled {
  color: #a2a2a2;
}
.actions hr {
  height: 1px;
  margin: 1px 0 2px;
  border: 0;
  background: linear-gradient(90deg, #ececec, #9c9c9c 40%);
}
.actions > hr {
  margin: 3px 4px 2px;
}
.subhead {
  display: flex;
  align-items: center;
  justify-content: space-between;
  height: 24px;
  padding: 0 11px 0 7px;
  background: linear-gradient(#e2e2e2, #fafafa);
  color: #111;
}
.subhead svg {
  display: block;
  width: 16px;
  height: 16px;
}
.subhead circle {
  fill: #ececec;
  stroke: #9c9c9c;
}
.subhead path {
  fill: none;
  stroke: #333;
  stroke-width: 1.8;
}

.status {
  display: flex;
  align-items: center;
  height: 21px;
  padding-left: 5px;
  background: linear-gradient(90deg, #e5e3e4, #e8e6e7 40%, #fafafa);
  line-height: 14px;
}
.status span {
  flex: 1;
}
.grip {
  width: 10px;
  height: 12px;
  margin: 6px 1px 0 3px;
  fill: #a2a2a2;
}

.context {
  position: absolute;
  left: 93px;
  top: 215px;
  width: 250px;
  padding: 1px;
  border: 1px solid #a8a8a8;
  background: linear-gradient(90deg, #f2f2f2 24px, #fcfcfc 24px);
  box-shadow: 1px 1px 1px #00000026;
}
.context button {
  display: flex;
  align-items: center;
  width: 100%;
  height: 22px;
  padding: 0 8px 0 2px;
  border: 1px solid transparent;
  text-align: left;
}
.context .hot {
  border-color: #2a8ce2;
  background: #d7ecfd;
}
.context span {
  flex: 1;
  margin-left: 14px;
}
.context hr {
  height: 1px;
  margin: 2px 0 2px 30px;
  border: 0;
  background: #c9c8c0;
}
</style>
